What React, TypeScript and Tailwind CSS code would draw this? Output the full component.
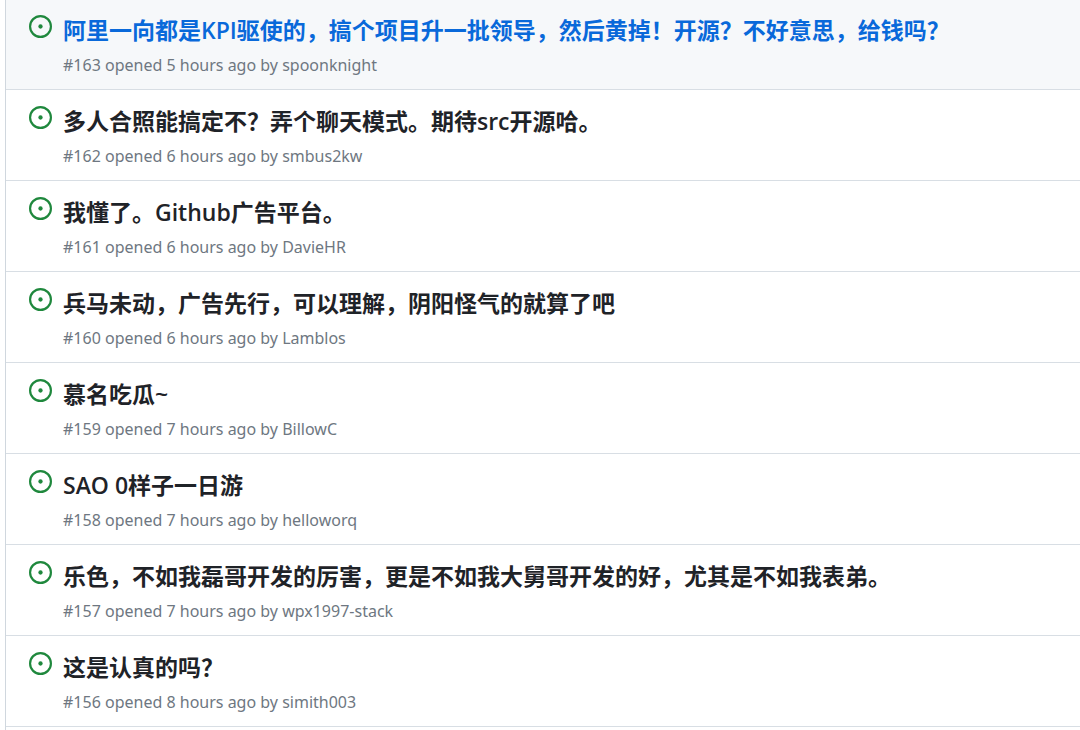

import clsx from "clsx";

interface Issue {
  number: number;
  title: string;
  hoursAgo: number;
  author: string;
  active?: boolean;
}

const ISSUES: Issue[] = [
  {
    number: 163,
    title: "阿里一向都是KPI驱使的，搞个项目升一批领导，然后黄掉！开源？不好意思，给钱吗？",
    hoursAgo: 5,
    author: "spoonknight",
    active: true,
  },
  { number: 162, title: "多人合照能搞定不？弄个聊天模式。期待src开源哈。", hoursAgo: 6, author: "smbus2kw" },
  { number: 161, title: "我懂了。Github广告平台。", hoursAgo: 6, author: "DavieHR" },
  { number: 160, title: "兵马未动，广告先行，可以理解，阴阳怪气的就算了吧", hoursAgo: 6, author: "Lamblos" },
  { number: 159, title: "慕名吃瓜~", hoursAgo: 7, author: "BillowC" },
  { number: 158, title: "SAO 0样子一日游", hoursAgo: 7, author: "helloworq" },
  { number: 157, title: "乐色，不如我磊哥开发的厉害，更是不如我大舅哥开发的好，尤其是不如我表弟。", hoursAgo: 7, author: "wpx1997-stack" },
  { number: 156, title: "这是认真的吗？", hoursAgo: 8, author: "simith003" },
];

function OpenIcon() {
  return (
    <svg viewBox="0 0 16 16" className="size-[23px] shrink-0 text-[#1f883d]" fill="currentColor" role="img" aria-label="Open issue">
      <path d="M8 9.5a1.5 1.5 0 1 0 0-3 1.5 1.5 0 0 0 0 3Z" />
      <path d="M8 0a8 8 0 1 1 0 16A8 8 0 0 1 8 0ZM1.5 8a6.5 6.5 0 1 0 13 0 6.5 6.5 0 0 0-13 0Z" />
    </svg>
  );
}

function IssueRow({ issue }: { issue: Issue }) {
  return (
    <li
      className={clsx(
        "flex gap-[11px] border-b border-[#d8dee4] pt-4 pb-3 pl-[23px] pr-4 first:pt-[15px]",
        issue.active && "bg-[#f6f8fa]",
      )}
    >
      <OpenIcon />
      <div className="min-w-0 flex-1">
        <a
          href={`#issue-${issue.number}`}
          className={clsx(
            "block text-[23px] leading-[30px] font-semibold font-['Open_Sans','Noto_Sans_CJK_SC',sans-serif]",
            issue.active ? "text-[#0969da]" : "text-[#1f2328]",
          )}
        >
          {issue.title}
        </a>
        <p className="mt-2 text-base leading-6 text-[#6e7781]">
          #{issue.number} opened {issue.hoursAgo} hours ago by{" "}
          <a href={`#${issue.author}`}>{issue.author}</a>
        </p>
      </div>
    </li>
  );
}

export default function App() {
  return (
    <main className="h-screen overflow-hidden bg-white pl-[5px] font-['Noto_Sans','Noto_Sans_CJK_SC',sans-serif]">
      <ul className="min-h-full border-l border-[#d0d7de]">
        {ISSUES.map((issue) => (
          <IssueRow key={issue.number} issue={issue} />
        ))}
      </ul>
    </main>
  );
}
